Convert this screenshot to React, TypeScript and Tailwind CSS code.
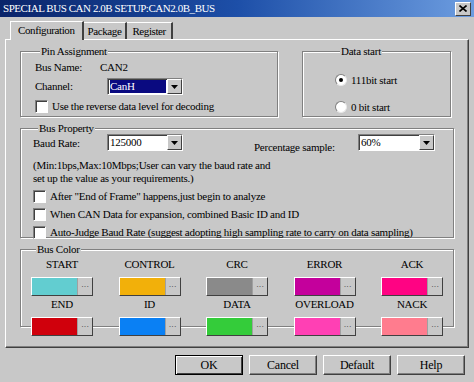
import React from 'react';

const serif = { fontFamily: '"Liberation Serif", "Times New Roman", serif' };

function Group({
  title,
  className,
  children,
}: {
  title: string;
  className?: string;
  children: React.ReactNode;
}) {
  return (
    <fieldset
      className={`border border-[#808080] shadow-[inset_1px_1px_0_#ffffff,1px_1px_0_#ffffff] ${className ?? ''}`}
    >
      <legend className="ml-[5px] px-[1px] bg-[#c8c8c8] leading-[12px]">{title}</legend>
      {children}
    </fieldset>
  );
}

function Checkbox({ label }: { label: string }) {
  return (
    <div className="flex items-center gap-[4px] h-[18px]">
      <span className="w-[13px] h-[13px] bg-white border border-t-[#808080] border-l-[#808080] border-b-white border-r-white shadow-[inset_1px_1px_0_#404040]" />
      <span>{label}</span>
    </div>
  );
}

function Radio({ label, checked }: { label: string; checked?: boolean }) {
  return (
    <div className="flex items-center gap-[4px] h-[14px]">
      <span className="w-[12px] h-[12px] rounded-full bg-white border border-t-[#808080] border-l-[#808080] border-b-[#e8e8e8] border-r-[#e8e8e8] flex items-center justify-center">
        {checked && <span className="w-[4px] h-[4px] rounded-full bg-black" />}
      </span>
      <span>{label}</span>
    </div>
  );
}

function Combo({
  value,
  width,
  highlight,
}: {
  value: string;
  width: string;
  highlight?: boolean;
}) {
  return (
    <div
      className={`${width} h-[17px] bg-white flex items-stretch border border-t-[#808080] border-l-[#808080] border-b-white border-r-white shadow-[inset_1px_1px_0_#404040]`}
    >
      <div className="flex-1 flex items-center pl-[2px] pr-[1px] py-[1px]">
        <span
          className={`flex-1 leading-[13px] ${highlight ? 'bg-[#0a0a80] text-white' : ''}`}
        >
          {value}
        </span>
      </div>
      <div className="w-[15px] bg-[#c8c8c8] border border-t-white border-l-white border-b-[#404040] border-r-[#404040] flex items-center justify-center">
        <svg width="7" height="4" viewBox="0 0 7 4">
          <path d="M0 0h7L3.5 4z" fill="#000" />
        </svg>
      </div>
    </div>
  );
}

function Swatch({ label, color }: { label: string; color: string }) {
  return (
    <div className="flex flex-col items-center">
      <div className="h-[15px] leading-[15px] mb-[5px]">{label}</div>
      <div className="w-[62px] h-[19px] flex border border-t-white border-l-white border-b-[#404040] border-r-[#404040]">
        <div className="flex-1" style={{ backgroundColor: color }} />
        <div className="w-[15px] bg-[#c8c8c8] border-l border-[#a0a0a0] flex items-center justify-center text-[9px] leading-none text-[#404040]">
          ···
        </div>
      </div>
    </div>
  );
}

function Button({ label, def }: { label: string; def?: boolean }) {
  return (
    <div
      className={`w-[68px] h-[20px] flex items-center justify-center border ${
        def
          ? 'border-black shadow-[inset_1px_1px_0_#ffffff,inset_-1px_-1px_0_#404040]'
          : 'border-t-white border-l-white border-b-[#404040] border-r-[#404040] shadow-[inset_-1px_-1px_0_#808080]'
      }`}
    >
      {label}
    </div>
  );
}

const colors: [string, string][] = [
  ['START', '#62cdd0'],
  ['CONTROL', '#f2b00a'],
  ['CRC', '#8a8a8a'],
  ['ERROR', '#c4009c'],
  ['ACK', '#ff0383'],
  ['END', '#d0000c'],
  ['ID', '#0a80f4'],
  ['DATA', '#34cc3a'],
  ['OVERLOAD', '#ff40b4'],
  ['NACK', '#ff7c8e'],
];

export default function App() {
  return (
    <div
      className="w-[474px] h-[382px] bg-[#c8c8c8] text-black text-[11px] tracking-[-0.25px] flex flex-col overflow-hidden"
      style={serif}
    >
      {/* Title bar */}
      <div className="h-[19px] flex items-center justify-between pl-[3px] pr-[3px] bg-gradient-to-r from-[#0a246a] via-[#1d4fa8] to-[#6d9de0]">
        <span className="text-white text-[11px] tracking-[-0.45px]">
          SPECIAL BUS CAN 2.0B SETUP:CAN2.0B_BUS
        </span>
        <div className="w-[16px] h-[14px] bg-[#c8c8c8] border border-t-white border-l-white border-b-[#404040] border-r-[#404040] flex items-center justify-center">
          <svg width="8" height="7" viewBox="0 0 8 7">
            <path d="M0.5 0.5L7.5 6.5M7.5 0.5L0.5 6.5" stroke="#000" strokeWidth="1.6" />
          </svg>
        </div>
      </div>

      <div className="flex-1 flex flex-col px-[5px] pt-[3px]">
        {/* Tabs */}
        <div className="flex items-end h-[19px] pl-[5px] text-[11px] tracking-[-0.4px] relative z-10">
          <div className="h-[19px] px-[7px] flex items-center bg-[#c8c8c8] border-t border-l border-white border-r-2 border-r-[#404040] -mb-[1px] pb-[1px]">
            Configuration
          </div>
          <div className="h-[17px] px-[4px] flex items-center border-t border-white border-r-2 border-r-[#404040]">
            Package
          </div>
          <div className="h-[17px] px-[5px] flex items-center border-t border-white border-r-2 border-r-[#404040]">
            Register
          </div>
        </div>

        {/* Panel */}
        <div className="h-[309px] border border-t-white border-l-white border-b-[#404040] border-r-[#404040] shadow-[inset_-1px_-1px_0_#808080] px-[14px] pt-[5px] flex flex-col gap-[5px]">
          <div className="flex gap-[24px]">
            <Group title="Pin Assignment" className="w-[258px] h-[72px] pl-[14px]">
              <div className="flex h-[18px] items-center mt-[1px]">
                <span className="w-[65px]">Bus Name:</span>
                <span>CAN2</span>
              </div>
              <div className="flex h-[21px] items-center">
                <span className="w-[72px]">Channel:</span>
                <Combo value="CanH" width="w-[76px]" highlight />
              </div>
              <Checkbox label="Use the reverse data level for decoding" />
            </Group>
            <Group title="Data start" className="w-[149px] h-[72px] pl-[32px]">
              <div className="flex flex-col gap-[13px] mt-[16px]">
                <Radio label="111bit start" checked />
                <Radio label="0 bit start" />
              </div>
            </Group>
          </div>

          <Group title="Bus Property" className="h-[116px] pl-[12px]">
            <div className="flex items-start h-[20px]">
              <span className="w-[74px] pt-[1px]">Baud Rate:</span>
              <Combo value="125000" width="w-[76px]" />
              <span className="ml-[71px] mt-[5px] w-[104px]">Percentage sample:</span>
              <Combo value="60%" width="w-[77px]" />
            </div>
            <p className="mt-[5px] leading-[13px]">
              (Min:1bps,Max:10Mbps;User can vary the baud rate and
              <br />
              set up the value as your requirements.)
            </p>
            <div className="mt-[2px] flex flex-col">
              <Checkbox label={'After "End of Frame" happens,just begin to analyze'} />
              <Checkbox label="When CAN Data for expansion, combined Basic ID and ID" />
              <Checkbox label="Auto-Judge Baud Rate (suggest adopting high sampling rate to carry on data sampling)" />
            </div>
          </Group>

          <Group title="Bus Color" className="h-[84px] pl-[10px]">
            <div className="grid grid-cols-[repeat(5,62px)] gap-x-[25.5px] gap-y-[1px] mt-[2px]">
              {colors.map(([l, c]) => (
                <Swatch key={l} label={l} color={c} />
              ))}
            </div>
          </Group>
        </div>
      </div>

      {/* Buttons */}
      <div className="flex justify-end gap-[6px] pr-[9px] pb-[7px] pt-[7px] text-[12px]">
        <Button label="OK" def />
        <Button label="Cancel" />
        <Button label="Default" />
        <Button label="Help" />
      </div>
    </div>
  );
}
